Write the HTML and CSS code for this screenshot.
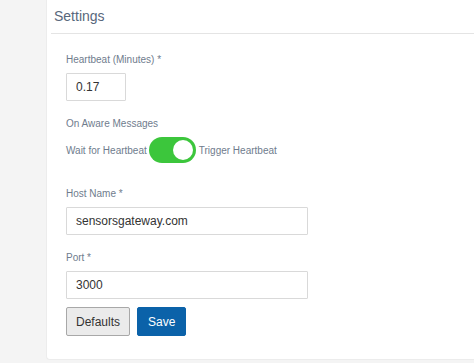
FILE: index.html
```html
<!DOCTYPE html>
<html>
<head>
  <title>Settings</title>
  <meta name="viewport" content="width=device-width, initial-scale=1.0">
  <link rel="stylesheet" href="styles.css">
</head>
<body>
  <div class="panel">
    <div class="panel-header">Settings</div>

    <div class="panel-body">
      <div class="field">
        <label class="field-label" for="heartbeat">Heartbeat (Minutes) *</label>
        <input type="text" id="heartbeat" class="input input-small" value="0.17">
      </div>

      <div class="field">
        <span class="field-label">On Aware Messages</span>
        <div class="toggle-row">
          <span class="toggle-text">Wait for Heartbeat</span>
          <label class="switch">
            <input type="checkbox" id="awareToggle" checked>
            <span class="slider"></span>
          </label>
          <span class="toggle-text">Trigger Heartbeat</span>
        </div>
      </div>

      <div class="field field-spaced">
        <label class="field-label" for="hostName">Host Name *</label>
        <input type="text" id="hostName" class="input" value="sensorsgateway.com">
      </div>

      <div class="field">
        <label class="field-label" for="port">Port *</label>
        <input type="text" id="port" class="input" value="3000">
      </div>

      <div class="actions">
        <button class="btn btn-default">Defaults</button>
        <button class="btn btn-primary">Save</button>
      </div>
    </div>
  </div>
</body>
</html>
```

FILE: styles.css
```css
body {
  margin: 0;
  background: #f4f4f4;
  font-family: "Liberation Sans", Arial, sans-serif;
  color: #333;
}

.panel {
  margin-left: 46px;
  height: 360px;
  background: #fff;
  border-left: 1px solid #ececec;
  border-bottom: 1px solid #ececec;
  border-bottom-left-radius: 4px;
  box-sizing: border-box;
}

.panel-header {
  margin-left: 4px;
  padding: 7px 0 8px 3px;
  font-size: 14px;
  line-height: 18px;
  color: #58677c;
  border-bottom: 1px solid #e4e4e4;
}

.panel-body {
  padding: 20px 0 0 19px;
}

.field {
  margin-bottom: 17px;
}

.field-spaced {
  margin-top: 25px;
}

.field-label {
  display: block;
  font-size: 10px;
  line-height: 12px;
  color: #6f7c8d;
  margin-bottom: 7px;
}

.input {
  display: block;
  box-sizing: border-box;
  width: 242px;
  height: 28px;
  padding: 0 9px;
  font-family: inherit;
  font-size: 12px;
  color: #333;
  border: 1px solid #d9d9d9;
  border-radius: 1px;
  background: #fff;
}

.input-small {
  width: 60px;
}

/* Toggle Switch */
.toggle-row {
  display: flex;
  align-items: center;
  height: 26px;
}

.toggle-text {
  font-size: 10px;
  color: #6f7c8d;
}

.switch {
  position: relative;
  display: inline-block;
  width: 47px;
  height: 26px;
  margin: 0 3px 0 2px;
}
.switch input {
  opacity: 0;
  width: 0;
  height: 0;
}
.slider {
  position: absolute;
  top: 0;
  left: 0;
  right: 0;
  bottom: 0;
  background-color: #ccc;
  border-radius: 13px;
  cursor: pointer;
  transition: 0.3s;
}
.slider:before {
  position: absolute;
  content: "";
  width: 20px;
  height: 20px;
  left: 3px;
  top: 3px;
  background: #fff;
  border-radius: 50%;
  transition: 0.3s;
}
input:checked + .slider {
  background-color: #3cc63c;
}
input:checked + .slider:before {
  transform: translateX(21px);
}

.actions {
  display: flex;
  gap: 7px;
  margin-top: -9px;
}

.btn {
  height: 29px;
  padding: 0 9px;
  font-family: inherit;
  font-size: 12px;
  border-radius: 2px;
  cursor: pointer;
}

.btn-default {
  background: #ebebeb;
  border: 1px solid #a8a8a8;
  color: #333;
}

.btn-primary {
  background: #0b62a9;
  border: 1px solid #0b62a9;
  color: #fff;
  padding: 0 10px;
}
```
